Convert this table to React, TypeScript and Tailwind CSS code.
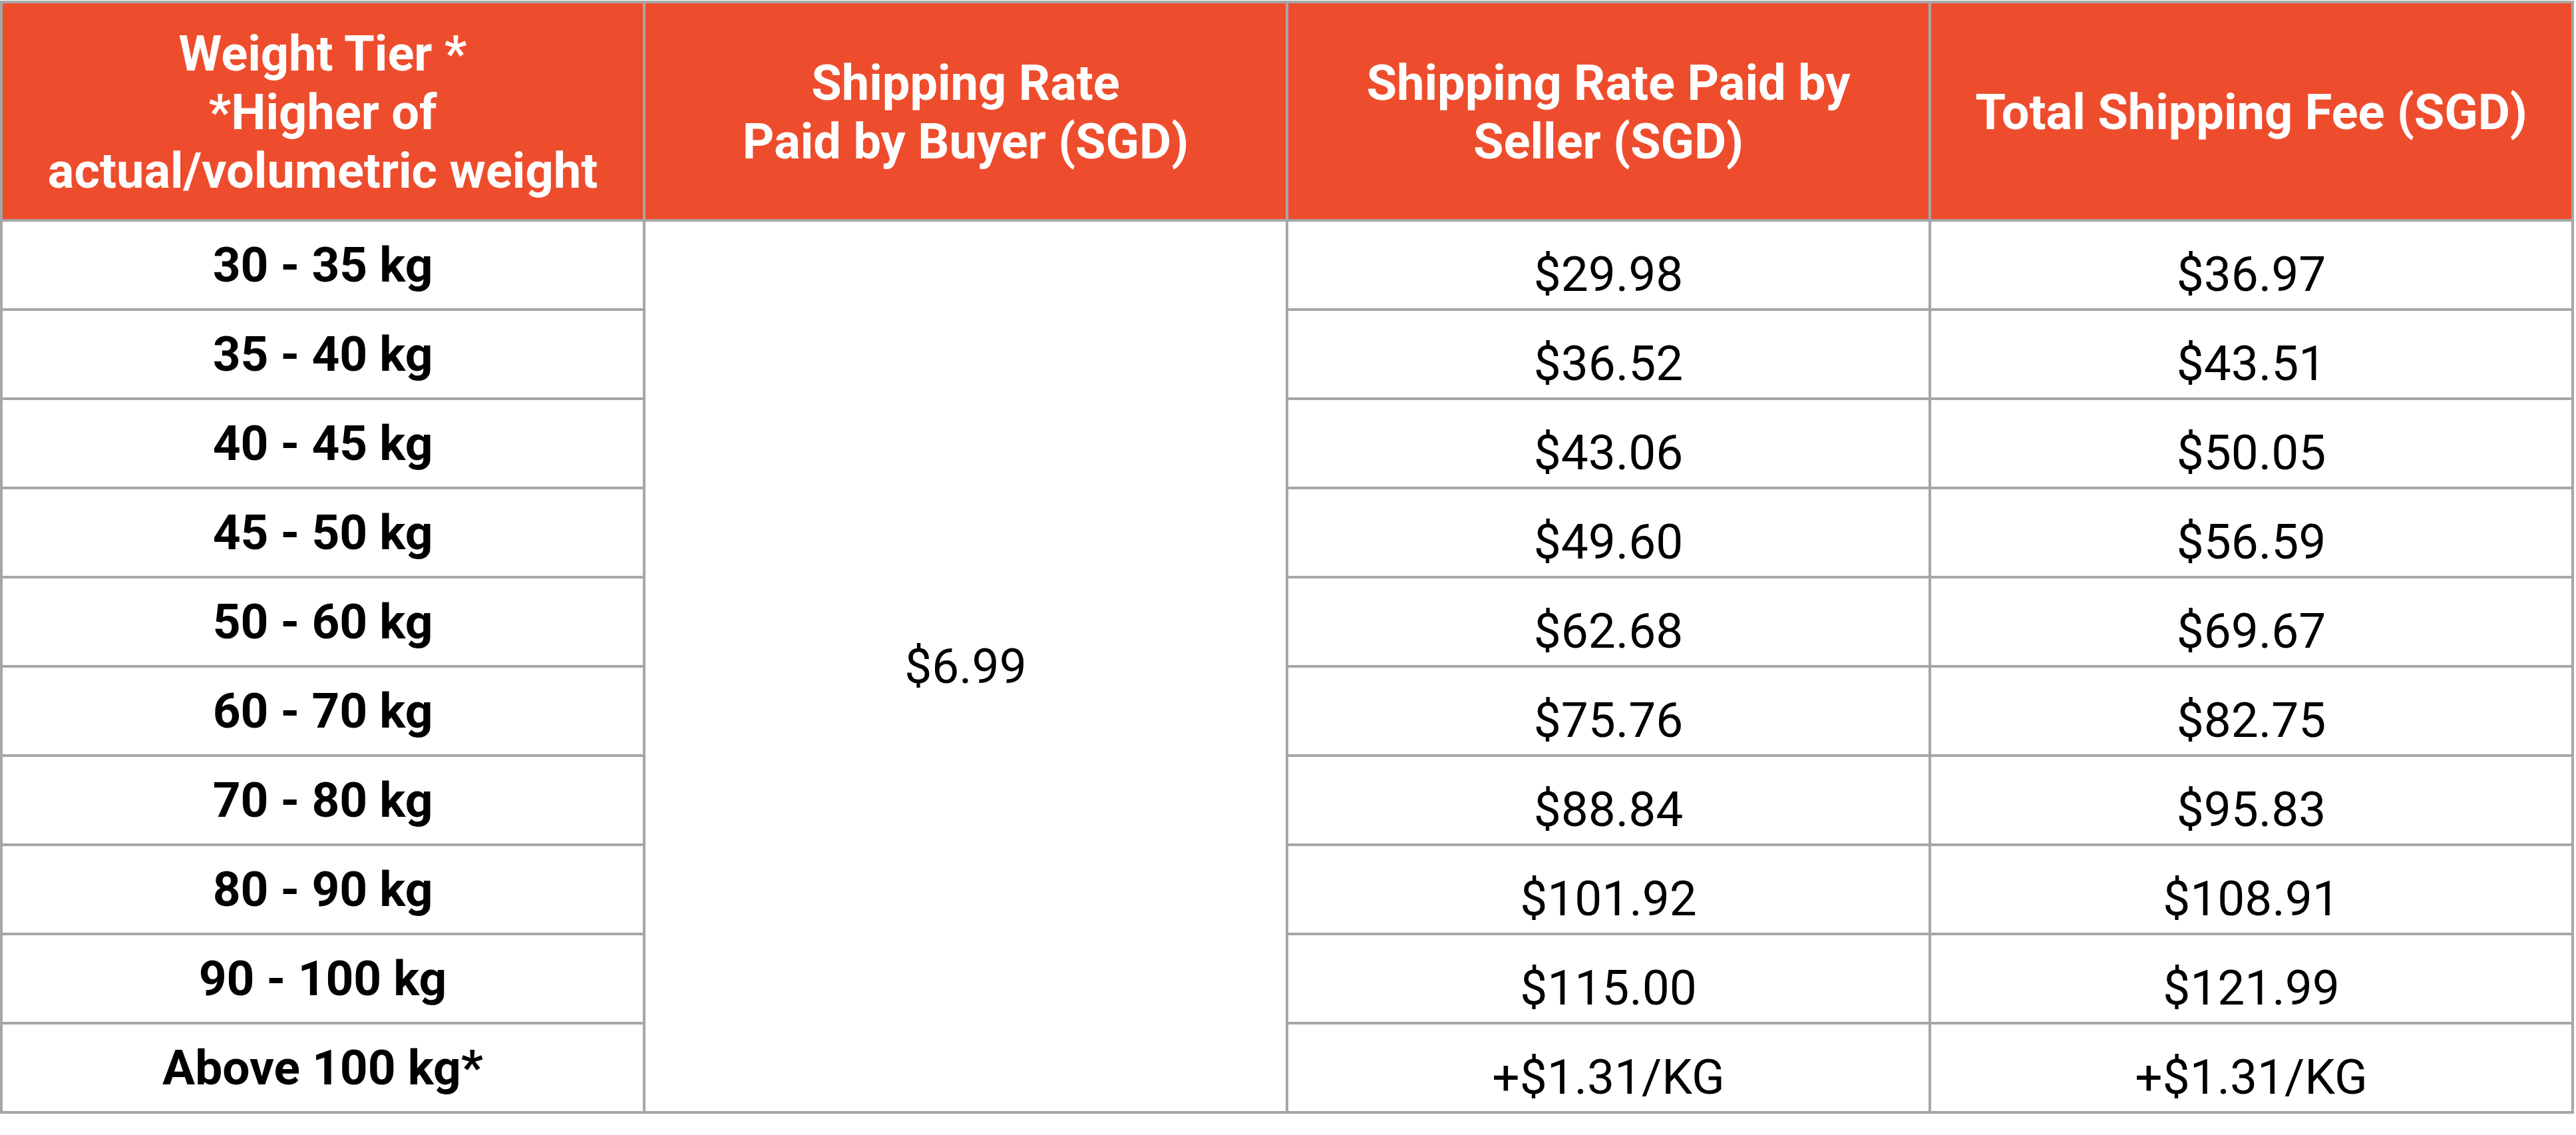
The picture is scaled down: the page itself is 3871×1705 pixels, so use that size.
const rows = [
  { tier: "30 - 35 kg", seller: "$29.98", total: "$36.97" },
  { tier: "35 - 40 kg", seller: "$36.52", total: "$43.51" },
  { tier: "40 - 45 kg", seller: "$43.06", total: "$50.05" },
  { tier: "45 - 50 kg", seller: "$49.60", total: "$56.59" },
  { tier: "50 - 60 kg", seller: "$62.68", total: "$69.67" },
  { tier: "60 - 70 kg", seller: "$75.76", total: "$82.75" },
  { tier: "70 - 80 kg", seller: "$88.84", total: "$95.83" },
  { tier: "80 - 90 kg", seller: "$101.92", total: "$108.91" },
  { tier: "90 - 100 kg", seller: "$115.00", total: "$121.99" },
  { tier: "Above 100 kg*", seller: "+$1.31/KG", total: "+$1.31/KG" },
];

const cell = "flex items-center justify-center text-center border-r-4 border-b-4 border-[#a6a6a6]";
const head = `${cell} bg-[#ee4d2d] pt-[4px] text-[74px] font-bold text-white`;

export default function App() {
  return (
    <div
      className="min-h-screen bg-white pt-[1px]"
      style={{ fontFamily: "Roboto, 'Liberation Sans', sans-serif" }}
    >
      <div className="grid w-[3868px] grid-cols-[repeat(4,966px)] grid-rows-[328px_repeat(10,134px)] border-l-4 border-t-4 border-[#a6a6a6] text-[73px] leading-[88px] text-black">
        {/* header */}
        <div className={head}>
          <span>
            Weight Tier *<br />
            *Higher of
            <br />
            actual/volumetric weight
          </span>
        </div>
        <div className={head}>
          <span>
            Shipping Rate
            <br />
            Paid by Buyer (SGD)
          </span>
        </div>
        <div className={head}>
          <span>
            Shipping Rate Paid by
            <br />
            Seller (SGD)
          </span>
        </div>
        <div className={head}>
          <span>Total Shipping Fee (SGD)</span>
        </div>

        {/* body */}
        {rows.map((r, i) => (
          <div key={r.tier} className="contents">
            <div className={`${cell} col-start-1 font-bold`}>{r.tier}</div>
            {i === 0 && (
              <div className={`${cell} col-start-2 row-span-10`}>$6.99</div>
            )}
            <div className={`${cell} col-start-3 pt-[28px]`}>{r.seller}</div>
            <div className={`${cell} col-start-4 pt-[28px]`}>{r.total}</div>
          </div>
        ))}
      </div>
    </div>
  );
}
